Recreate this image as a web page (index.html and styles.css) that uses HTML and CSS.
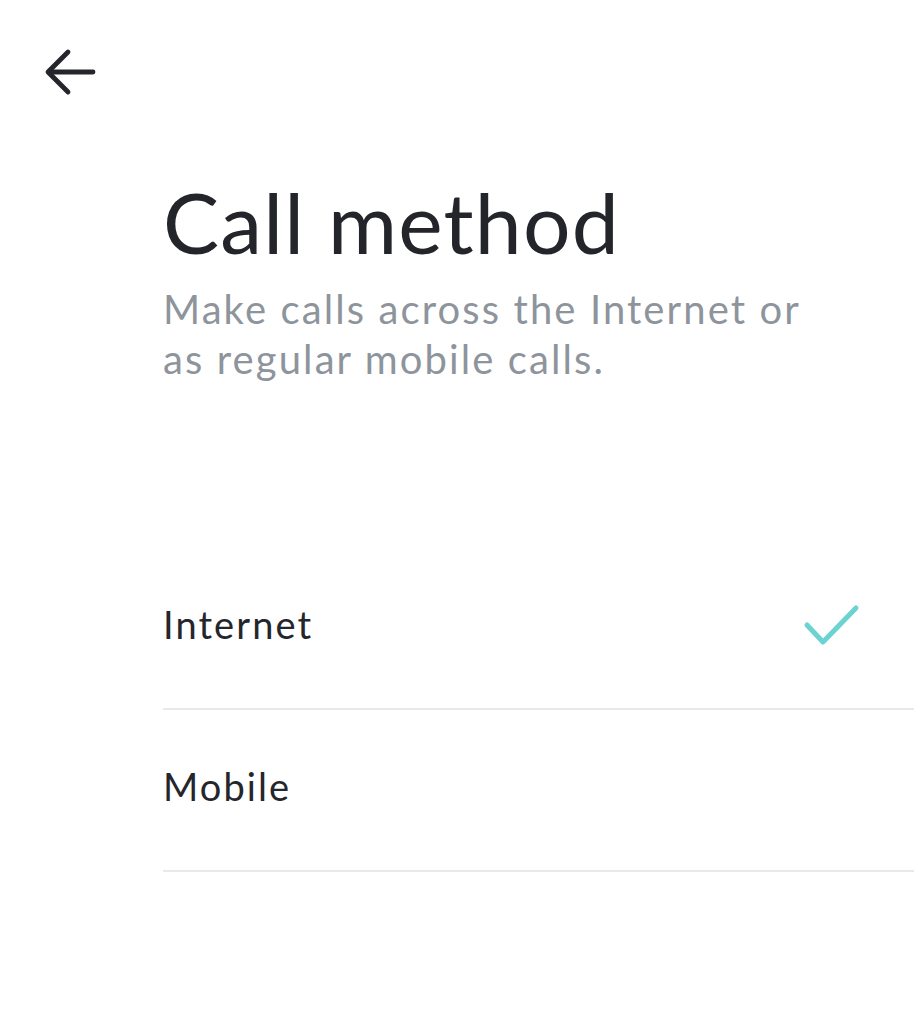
FILE: index.html
```html
<!DOCTYPE html>
<html lang="en">
<head>
<meta charset="utf-8">
<title>Call method</title>
<link rel="stylesheet" href="styles.css">
</head>
<body>
<div class="screen">
  <header class="topbar">
    <button class="back" aria-label="Back">
      <svg width="52" height="48" viewBox="0 0 52 48" fill="none" stroke="#24262b" stroke-width="4.8" stroke-linecap="round" stroke-linejoin="round">
        <path d="M49 24H5"/>
        <path d="M24 4L4 24L24 44"/>
      </svg>
    </button>
  </header>
  <main class="content">
    <h1 class="title">Call method</h1>
    <p class="subtitle">Make calls across the Internet or as regular mobile calls.</p>
    <ul class="options">
      <li class="option">
        <span class="label">Internet</span>
        <svg class="check" width="58" height="44" viewBox="0 0 58 44" fill="none" stroke="#6bd3d1" stroke-width="5" stroke-linecap="round" stroke-linejoin="round">
          <path d="M5 23L21 40L54 6"/>
        </svg>
      </li>
      <li class="option">
        <span class="label">Mobile</span>
      </li>
    </ul>
  </main>
</div>
</body>
</html>
```

FILE: styles.css
```css
html, body {
  margin: 0;
  padding: 0;
  background: #ffffff;
}

body {
  font-family: "Lato", "Noto Sans", sans-serif;
  color: #25262b;
}

.screen {
  width: 914px;
  min-height: 1024px;
}

.topbar {
  height: 172px;
  padding: 48px 0 0 44px;
  box-sizing: border-box;
}

.back {
  display: block;
  padding: 0;
  margin: 0;
  border: 0;
  background: none;
  width: 52px;
  height: 48px;
}

.back svg {
  display: block;
}

.content {
  padding-left: 163px;
}

.title {
  margin: 0;
  font-size: 84px;
  font-weight: 400;
  line-height: 100px;
  letter-spacing: 1.2px;
  color: #24252a;
}

.subtitle {
  margin: 12px 0 0;
  width: 680px;
  font-size: 40px;
  line-height: 50px;
  color: #8e949c;
  letter-spacing: 2.1px;
}

.options {
  list-style: none;
  margin: 164px 0 0;
  padding: 0;
}

.option {
  display: flex;
  align-items: center;
  justify-content: space-between;
  box-sizing: border-box;
  height: 162px;
  padding: 0 54px 8px 0;
  border-bottom: 2px solid #e8e9ec;
}

.label {
  font-size: 38px;
  letter-spacing: 2.1px;
  color: #25262b;
}

.check {
  display: block;
}
```
